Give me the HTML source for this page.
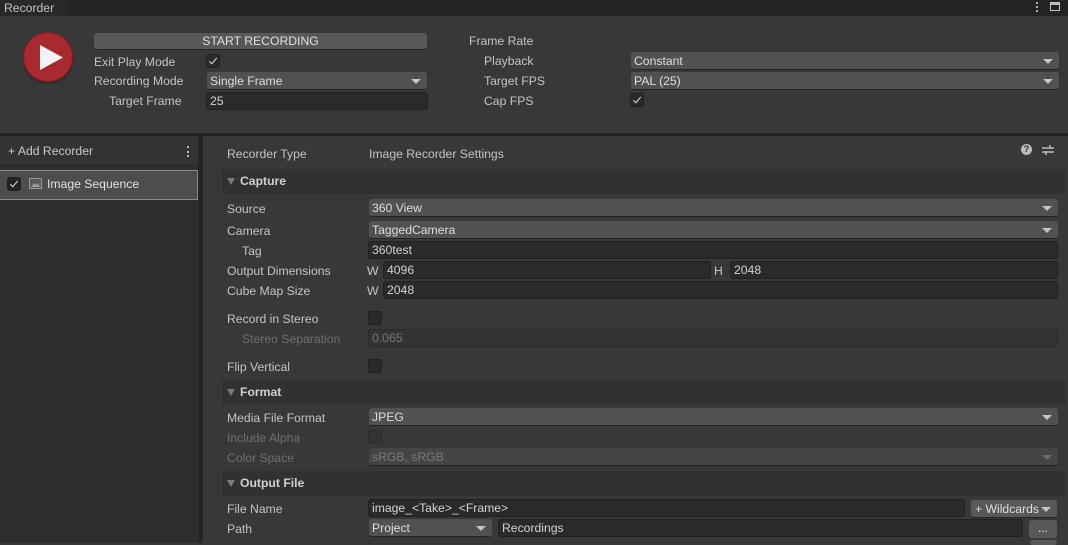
<!DOCTYPE html>
<html><head><style>
*{box-sizing:border-box;margin:0;padding:0}
body{width:1068px;height:543px;overflow:hidden;background:#383838;font-family:"Liberation Sans",sans-serif;font-size:12.2px;color:#c4c4c4;position:relative}
.a{position:absolute;white-space:nowrap}
.lbl{position:absolute;white-space:nowrap;line-height:14px}
.dim{color:#6f6f6f}
.dd{position:absolute;height:18px;background:#515151;border-radius:3px;border-bottom:1px solid #242424;padding-left:3px;line-height:18px;color:#dedede}
.dd.dis{background:#454545;color:#7a7a7a}
.dd::after{content:"";position:absolute;right:6px;top:7px;border-left:5px solid transparent;border-right:5px solid transparent;border-top:5px solid #c4c4c4}
.dd.dis::after{border-top-color:#6a6a6a}
.in{position:absolute;height:18px;background:#2a2a2a;border:1px solid #212121;border-radius:3px;padding-left:3px;line-height:17px;color:#d2d2d2}
.in.dis{background:#333;color:#777;border-color:#2c2c2c}
.cb{position:absolute;width:14px;height:14px;background:#2a2a2a;border:1px solid #202020;border-radius:3px}
.cb.ck::after{content:"";position:absolute;left:4px;top:1px;width:3px;height:7px;border:solid #e0e0e0;border-width:0 1.5px 1.5px 0;transform:rotate(40deg)}
.cb.dis{background:#333;border-color:#2c2c2c}
.sec{position:absolute;left:222px;width:843px;height:25px;background:#313131;font-weight:bold;color:#d0d0d0;line-height:25px;padding-left:18px}
.sec::before{content:"";position:absolute;left:5px;top:9px;border-left:4px solid transparent;border-right:4px solid transparent;border-top:7px solid #7a7a7a}
</style></head><body>
<div class="a" style="left:0;top:0;width:1068px;height:16px;background:#191919"></div>
<div class="a" style="left:0;top:0;width:68px;height:16px;background:#282828;color:#c4c4c4;line-height:16px;padding-left:4px">Recorder</div>
<div class="a" style="left:68px;top:0;width:1000px;height:16px;background:#232323"></div>
<div class="a" style="left:1036px;top:2px;width:2px;height:10px;border-left:2px dotted #aaa"></div>
<div class="a" style="left:1050px;top:2px;width:10px;height:9px;border:1px solid #c0c0c0;border-top-width:3px"></div>
<div class="a" style="left:23px;top:32px;width:50px;height:50px;border-radius:50%;background:#a82a2f;box-shadow:inset 0 0 0 1px #7d1e22, 0 1px 2px #222"></div>
<svg class="a" style="left:23px;top:32px" width="50" height="50"><polygon points="17,13 17,38 40,25.5" fill="#f2f2f2"/></svg>
<div class="a" style="left:94px;top:33px;width:333px;height:17px;background:#585858;border-radius:3px;border-bottom:1px solid #242424;text-align:center;line-height:17px;color:#e0e0e0">START RECORDING</div>
<div class="lbl" style="left:94px;top:55px">Exit Play Mode</div>
<div class="cb ck" style="left:206px;top:54px"></div>
<div class="lbl" style="left:94px;top:74px">Recording Mode</div>
<div class="dd" style="left:207px;top:72px;width:220px">Single Frame</div>
<div class="lbl" style="left:109px;top:94px">Target Frame</div>
<div class="in" style="left:206px;top:92px;width:222px">25</div>
<div class="lbl" style="left:469px;top:34px">Frame Rate</div>
<div class="lbl" style="left:484px;top:54px">Playback</div>
<div class="dd" style="left:631px;top:52px;width:428px">Constant</div>
<div class="lbl" style="left:484px;top:74px">Target FPS</div>
<div class="dd" style="left:631px;top:72px;width:428px">PAL (25)</div>
<div class="lbl" style="left:484px;top:94px">Cap FPS</div>
<div class="cb ck" style="left:630px;top:93px"></div>
<div class="a" style="left:0;top:133px;width:1068px;height:3px;background:#232323"></div>
<div class="a" style="left:0;top:136px;width:198px;height:407px;background:#2d2d2d"></div>
<div class="a" style="left:0;top:136px;width:198px;height:30px;background:#333;border-bottom:1px solid #262626"></div>
<div class="lbl" style="left:8px;top:144px;color:#c8c8c8">+ Add Recorder</div>
<div class="a" style="left:187px;top:146px;width:2px;height:11px;border-left:2px dotted #bbb"></div>
<div class="a" style="left:0;top:170px;width:198px;height:30px;background:#4d4d4d;border:1px solid #8a8a8a;border-left:none"></div>
<div class="cb ck" style="left:7px;top:177px;background:#222"></div>
<svg class="a" style="left:29px;top:178px" width="13" height="11"><rect x="0.5" y="0.5" width="12" height="10" fill="#5a5a5a" stroke="#999"/><path d="M2 9L5 5L7 7L9 5L11 9Z" fill="#999"/></svg>
<div class="lbl" style="left:47px;top:177px;color:#e2e2e2">Image Sequence</div>
<div class="a" style="left:198px;top:136px;width:5px;height:407px;background:#252525"></div>
<div class="lbl" style="left:227px;top:147px">Recorder Type</div>
<div class="lbl" style="left:369px;top:147px">Image Recorder Settings</div>
<div class="a" style="left:1021px;top:144px;width:11px;height:11px;border-radius:50%;background:#bbb;color:#333;font-size:9px;font-weight:bold;text-align:center;line-height:11px">?</div>
<svg class="a" style="left:1042px;top:144px" width="12" height="12"><path d="M0 4H12M0 8H12M8 1V5M4 7V11" stroke="#bbb" stroke-width="1.5"/></svg>
<div class="sec" style="top:169px">Capture</div>
<div class="lbl" style="left:227px;top:202px">Source</div>
<div class="dd" style="left:369px;top:199px;width:689px">360 View</div>
<div class="lbl" style="left:227px;top:224px">Camera</div>
<div class="dd" style="left:369px;top:221px;width:689px">TaggedCamera</div>
<div class="lbl" style="left:242px;top:244px">Tag</div>
<div class="in" style="left:368px;top:241px;width:690px">360test</div>
<div class="lbl" style="left:227px;top:264px">Output Dimensions</div>
<div class="lbl" style="left:367px;top:264px">W</div>
<div class="in" style="left:383px;top:261px;width:328px">4096</div>
<div class="lbl" style="left:714px;top:264px">H</div>
<div class="in" style="left:730px;top:261px;width:328px">2048</div>
<div class="lbl" style="left:227px;top:284px">Cube Map Size</div>
<div class="lbl" style="left:367px;top:284px">W</div>
<div class="in" style="left:383px;top:281px;width:675px">2048</div>
<div class="lbl" style="left:227px;top:312px">Record in Stereo</div>
<div class="cb" style="left:368px;top:311px"></div>
<div class="lbl dim" style="left:242px;top:332px">Stereo Separation</div>
<div class="in dis" style="left:368px;top:329px;width:690px">0.065</div>
<div class="lbl" style="left:227px;top:360px">Flip Vertical</div>
<div class="cb" style="left:368px;top:359px"></div>
<div class="sec" style="top:380px">Format</div>
<div class="lbl" style="left:227px;top:411px">Media File Format</div>
<div class="dd" style="left:369px;top:408px;width:689px">JPEG</div>
<div class="lbl dim" style="left:227px;top:431px">Include Alpha</div>
<div class="cb dis" style="left:368px;top:430px"></div>
<div class="lbl dim" style="left:227px;top:451px">Color Space</div>
<div class="dd dis" style="left:369px;top:448px;width:689px">sRGB, sRGB</div>
<div class="sec" style="top:471px">Output File</div>
<div class="lbl" style="left:227px;top:502px">File Name</div>
<div class="in" style="left:368px;top:499px;width:597px">image_&lt;Take&gt;_&lt;Frame&gt;</div>
<div class="dd" style="left:971px;top:500px;width:86px;background:#585858;padding-left:4px">+ Wildcards</div>
<div class="lbl" style="left:227px;top:522px">Path</div>
<div class="dd" style="left:369px;top:519px;width:123px">Project</div>
<div class="in" style="left:498px;top:519px;width:525px">Recordings</div>
<div class="a" style="left:1029px;top:520px;width:28px;height:18px;background:#585858;border-radius:3px;text-align:center;line-height:16px;color:#ddd">...</div>
<div class="a" style="left:1030px;top:540px;width:27px;height:5px;background:#585858;border-radius:3px"></div>
</body></html>
